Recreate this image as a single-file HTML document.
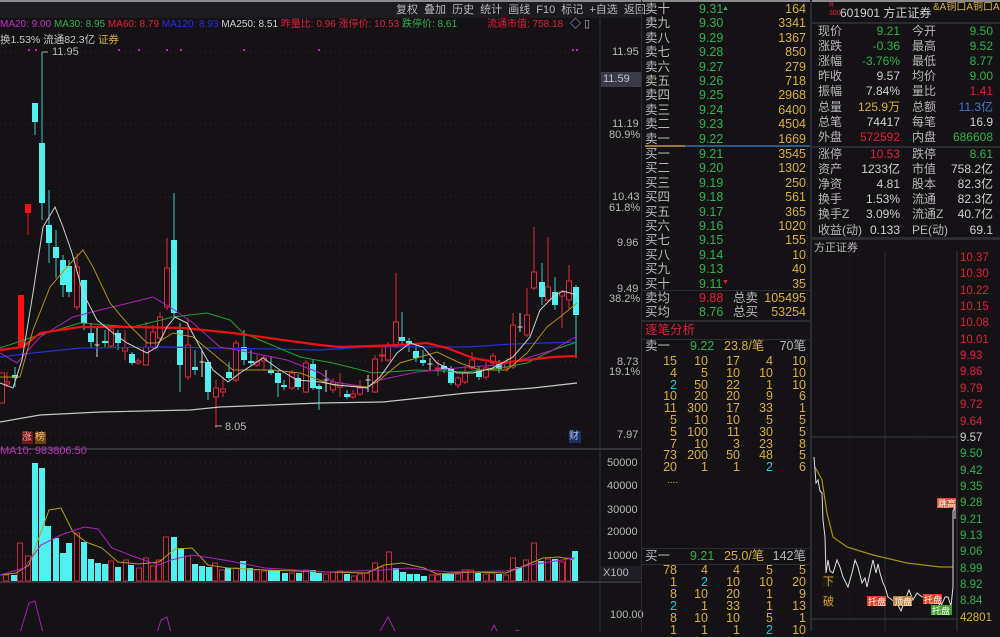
<!DOCTYPE html>
<html><head><meta charset="utf-8"><style>
*{margin:0;padding:0;box-sizing:border-box}
body{width:1000px;height:631px;overflow:hidden;background:#141215;font-family:"Liberation Sans","Noto Sans CJK SC",sans-serif;font-size:11px;color:#c8c8c8;position:relative}
.a{position:absolute;white-space:nowrap;line-height:14px;height:14px}
.r{text-align:right}
.g{color:#2fb34a}.y{color:#d8b040}.rd{color:#e0203a}.w{color:#d0d0d0}.gr{color:#b8b8b8}.cy{color:#22c8e0}.bl{color:#3a7ad8}
</style></head><body>
<div class="a" style="left:0;top:0;width:1000px;height:2px;background:#8a8a8a"></div>
<div class="a" style="left:0;top:2px;width:641px;height:16px;background:#1c1b20"></div>
<div class="a gr" style="left:396px;top:3px;font-size:11px;word-spacing:3px">复权 叠加 历史 统计 画线 F10 标记 +自选 返回</div>
<div class="a" style="left:0;top:18px;font-size:10px"><span style="color:#c030c0">MA20: 9.00</span> <span class="g">MA30: 8.95</span> <span class="rd">MA60: 8.79</span> <span style="color:#2030e0">MA120: 8.93</span> <span class="w">MA250: 8.51</span> <span class="rd">昨量比: 0.96</span> <span class="rd">涨停价: 10.53</span> <span class="g">跌停价: 8.61</span></div>
<div class="a rd" style="left:487px;top:18px;font-size:10px">流通市值: 758.18</div>
<div class="a gr" style="left:570px;top:17px">◇ ▯</div>
<div class="a" style="left:0;top:33px;font-size:10.5px">换1.53% 流通82.3亿 <span class="y">证券</span></div>

<svg id="ch" width="641" height="631" style="position:absolute;left:0;top:0"></svg>

<div class="a gr" style="left:612px;top:45px">11.95</div>
<div class="a" style="left:601px;top:72px;width:40px;height:15px;background:#3a3a48;color:#c0c0c8;padding-left:2px">11.59</div>
<div class="a gr" style="left:612px;top:117px">11.19</div>
<div class="a gr" style="left:609px;top:128px">80.9%</div>
<div class="a gr" style="left:612px;top:190px">10.43</div>
<div class="a gr" style="left:609px;top:201px">61.8%</div>
<div class="a gr" style="left:617px;top:236px">9.96</div>
<div class="a gr" style="left:617px;top:282px">9.49</div>
<div class="a gr" style="left:609px;top:292px">38.2%</div>
<div class="a gr" style="left:617px;top:355px">8.73</div>
<div class="a gr" style="left:609px;top:365px">19.1%</div>
<div class="a gr" style="left:617px;top:428px">7.97</div>
<div class="a gr" style="left:607px;top:456px">50000</div>
<div class="a gr" style="left:607px;top:479px">40000</div>
<div class="a gr" style="left:607px;top:503px">30000</div>
<div class="a gr" style="left:607px;top:525px">20000</div>
<div class="a gr" style="left:607px;top:549px">10000</div>
<div class="a gr" style="left:601px;top:566px;width:40px;background:#1e1e24;padding-left:2px">X100</div>
<div class="a gr" style="left:610px;top:608px">100.00</div>
<div class="a" style="left:0;top:444px;color:#c030c0">MA10: 983806.50</div>
<div class="a" style="left:22px;top:432px;width:11px;height:12px;line-height:12px;background:#701818;color:#f0a0a0;font-size:10px">涨</div>
<div class="a" style="left:35px;top:432px;width:11px;height:12px;line-height:12px;background:#704010;color:#f0c080;font-size:10px">榜</div>
<div class="a" style="left:569px;top:431px;width:12px;height:12px;line-height:12px;background:#1c3060;color:#a0c0f0;font-size:10px">财</div>
<div class="a gr" style="left:52px;top:45px">11.95</div>
<div class="a gr" style="left:225px;top:420px">8.05</div>

<div class="a" style="left:641px;top:0;width:1px;height:631px;background:#2c2c30"></div>
<div class="a" style="left:810px;top:0;width:2px;height:631px;background:#2c2c30"></div>
<div class="a" style="left:645px;top:145px;width:40px;height:1.5px;background:#9a7a30"></div>
<div class="a" style="left:685px;top:145px;width:125px;height:1.5px;background:#2a5a8a"></div>
<div class="a" style="left:642px;top:290px;width:168px;height:1px;background:#2c2c30"></div>
<div class="a" style="left:642px;top:320px;width:168px;height:2px;background:#2c2c30"></div>
<div class="a" style="left:642px;top:339px;width:168px;height:1px;background:#2c2c30"></div>
<div class="a" style="left:642px;top:548px;width:168px;height:1px;background:#2c2c30"></div>
<div class="a" style="left:642px;top:564px;width:168px;height:1px;background:#2c2c30"></div>
<div id="ob"></div>
<div class="a rd" style="left:645px;top:323px;font-size:12.5px">逐笔分析</div>

<div class="a" style="left:812px;top:22px;width:188px;height:2px;background:#2c2c30"></div>
<div class="a" style="left:812px;top:146px;width:188px;height:2px;background:#2c2c30"></div>
<div class="a" style="left:812px;top:237px;width:188px;height:3px;background:#2c2c30"></div>
<div class="a rd" style="left:829px;top:2px;font-size:7px;line-height:8px">R<br>300</div>
<div class="a w" style="left:840px;top:6px;font-size:12px">601901 方正证券</div>
<div class="a y" style="left:933px;top:1px;font-size:10px">&amp;A铜口A铜口A铜</div>
<div class="a gr" style="left:814px;top:241px;font-size:11px">方正证券</div>
<svg width="188" height="380" style="position:absolute;left:812px;top:251px">
<g stroke="#2a2a30" stroke-dasharray="1,3"><line x1="38" y1="0" x2="38" y2="380"/><line x1="108" y1="0" x2="108" y2="380"/></g>
<line x1="73" y1="0" x2="73" y2="380" stroke="#2c2c34"/>
<line x1="145" y1="0" x2="145" y2="380" stroke="#3a3a40"/>
<line x1="0" y1="186" x2="145" y2="186" stroke="#3a3a44"/>
<line x1="0" y1="368" x2="145" y2="368" stroke="#3a3a44"/>
<polyline fill="none" stroke="#a89010" stroke-width="1.2" points="3,216 10,229 15,262 21,286 35,296 61,304 95,312 128,316 141,316"/>
<polyline fill="none" stroke="#e0e0e0" stroke-width="1" points="2,206 4,232 6,229 8,240 10,242 11,269 13,286 14,322 16,309 18,320 21,322 25,309 28,316 31,326 34,332 36,336 40,322 43,309 46,316 50,332 53,327 55,336 58,322 61,309 64,322 66,313 68,322 71,332 73,336 76,346 80,349 85,352 89,360 93,349 97,339 101,349 105,342 110,346 116,346 121,349 126,352 129,355 133,346 136,346 139,355 141,336 141,260 143,256 143,268"/>
<rect x="10" y="324" width="11" height="12" fill="#201a14"/><text x="11" y="334" fill="#d8a030" font-size="11">下</text>
<rect x="10" y="344" width="11" height="12" fill="#201a14"/><text x="11" y="354" fill="#d8a030" font-size="11">破</text>
<rect x="55" y="345" width="19" height="10" fill="#e04020"/><text x="56" y="354" fill="#fff" font-size="9">托盘</text>
<rect x="81" y="345" width="19" height="10" fill="#c08040"/><text x="82" y="354" fill="#fff" font-size="9">顶盘</text>
<rect x="111" y="343" width="19" height="10" fill="#e04020"/><text x="112" y="352" fill="#fff" font-size="9">托盘</text>
<rect x="119" y="354" width="21" height="10" fill="#40a030"/><text x="120" y="363" fill="#fff" font-size="9">托盘</text>
<rect x="125" y="247" width="19" height="10" fill="#e05030"/><text x="126" y="256" fill="#fff" font-size="9">跳高</text>
</svg>
<div id="ax"></div>

<script>
var svg=document.getElementById('ch'),h='';
function L(x1,y1,x2,y2,c,w,d){h+='<line x1="'+x1+'" y1="'+y1+'" x2="'+x2+'" y2="'+y2+'" stroke="'+c+'" stroke-width="'+(w||1)+'"'+(d?' stroke-dasharray="'+d+'"':'')+'/>';}
[52,124,197,242,288,361,434].forEach(function(y){L(0,y,600,y,'#2a2a2e',1,'1,4')});
[463,486,510,532,556].forEach(function(y){L(0,y,600,y,'#2a2a2e',1,'1,4')});
[60,230,340,450].forEach(function(x){L(x,45,x,580,'#222226',1,'1,4')});
L(600,18,600,631,'#34343a');L(0,449,641,449,'#34343a',2);L(0,582,641,582,'#34343a',2);
[28,35,118,138,166,180,243,318,572,576].forEach(function(x){h+='<rect x="'+x+'" y="49" width="2" height="2" fill="#c020c0"/>'});
var C=[[2,373,403,373,403,'r'],[7,382,384,372,387,'r'],[15,375,378,367,387,'c'],[21,295,347,295,347,'R'],[28,204,213,204,235,'R'],[35,103,122,103,135,'c'],[42,143,203,52,220,'c'],[49,225,243,190,263,'c'],[56,247,258,230,278,'c'],[63,260,285,255,297,'c'],[69,266,292,260,297,'c'],[77,267,307,253,310,'r'],[84,280,323,280,330,'c'],[91,333,342,323,348,'c'],[97,345,346,327,357,'w'],[105,341,343,330,347,'c'],[111,329,346,325,347,'r'],[118,333,343,330,350,'c'],[125,348,351,330,360,'r'],[132,354,363,352,365,'c'],[138,361,363,358,365,'r'],[146,347,365,322,365,'r'],[153,332,347,325,350,'r'],[160,317,338,312,340,'r'],[167,268,307,238,310,'r'],[174,240,313,193,317,'c'],[180,330,365,323,392,'c'],[188,345,377,318,380,'r'],[195,367,370,350,375,'c'],[202,362,363,350,377,'w'],[208,362,392,360,400,'c'],[216,388,397,380,428,'r'],[223,389,392,377,397,'r'],[229,372,378,362,380,'c'],[236,343,380,340,382,'r'],[244,347,360,330,365,'c'],[251,361,363,350,365,'c'],[257,362,365,355,367,'r'],[264,358,361,355,370,'r'],[271,370,373,357,375,'c'],[278,373,383,370,397,'c'],[284,385,387,380,390,'c'],[292,373,388,370,390,'r'],[298,378,387,374,390,'c'],[306,363,392,360,393,'r'],[313,364,388,360,390,'c'],[319,386,389,384,410,'c'],[326,380,381,370,392,'w'],[333,382,390,378,393,'r'],[340,383,387,373,397,'r'],[347,394,397,390,399,'c'],[353,394,397,390,399,'r'],[360,388,394,380,396,'r'],[368,380,381,375,392,'w'],[375,359,392,355,393,'r'],[382,355,356,348,362,'r'],[388,347,360,342,362,'r'],[396,322,346,273,348,'r'],[402,337,341,312,345,'c'],[409,341,345,338,352,'c'],[416,351,358,345,362,'c'],[423,360,363,350,366,'c'],[430,364,366,358,370,'w'],[438,368,369,360,376,'r'],[444,366,370,362,373,'c'],[451,368,383,366,385,'c'],[458,378,385,376,388,'r'],[465,373,382,366,384,'r'],[472,360,368,352,370,'r'],[479,370,377,366,380,'c'],[486,368,377,362,380,'r'],[493,356,363,353,370,'r'],[499,364,369,360,373,'c'],[507,362,368,358,372,'r'],[513,325,367,313,369,'r'],[520,327,329,313,332,'w'],[527,315,335,288,337,'r'],[534,272,288,227,290,'r'],[542,282,297,263,305,'c'],[548,287,300,237,302,'r'],[555,292,305,277,310,'c'],[562,292,296,290,328,'r'],[569,281,300,265,310,'r'],[576,287,315,285,358,'c']];
var col={r:'#e0283c',R:'#ff1010',c:'#50f0f0',w:'#d8d8d8'};
C.forEach(function(k){var c=col[k[5]];L(k[0],k[3],k[0],k[4],c==col.c?'#40c8c8':c);
 if(k[5]=='w'){L(k[0]-2.5,k[1],k[0]+2.5,k[1],c);return;}
 var hh=Math.max(1,k[2]-k[1]);
 if(k[5]=='r')h+='<rect x="'+(k[0]-2.5)+'" y="'+k[1]+'" width="5" height="'+hh+'" fill="#141215" stroke="'+c+'"/>';
 else h+='<rect x="'+(k[0]-3)+'" y="'+k[1]+'" width="6" height="'+hh+'" fill="'+c+'"/>';});
function P(p,c,w){h+='<polyline fill="none" stroke="'+c+'" stroke-width="'+(w||1)+'" points="'+p+'"/>';}
P('0,422 40,415 100,412 190,410 220,407 320,403 383,402 467,393 533,388 577,383','#c8c8c8',1.3);
P('0,357 33,353 80,348 167,347 320,350 367,347 467,347 513,344 577,342','#2030e0',1.2);
P('0,348 33,337 80,323 133,327 173,317 207,313 230,320 243,333 267,343 300,357 333,363 373,373 417,370 467,372 500,368 527,363 553,350 577,342','#20a030');
P('0,353 17,363 40,337 73,317 100,310 133,302 153,297 170,307 193,323 220,347 253,353 287,360 320,373 333,382 367,387 380,380 417,372 467,367 500,365 527,358 553,350 577,336','#b020c0');
P('0,350 23,347 40,333 80,327 133,327 183,328 233,333 283,340 320,345 340,347 400,345 427,343 447,348 473,358 500,363 527,360 553,357 577,356','#f01010',2.2);
P('0,377 20,377 33,330 50,287 67,267 83,250 93,267 110,303 127,323 147,343 157,343 173,333 193,337 217,357 233,370 273,370 300,373 333,385 367,387 377,382 400,363 437,352 460,363 480,370 507,370 527,353 547,327 560,317 577,303','#b09010');
P('0,383 13,388 22,360 33,293 43,227 55,207 63,227 72,253 83,293 97,320 113,333 127,343 147,353 157,347 167,327 175,317 187,323 200,347 213,370 228,382 240,373 263,358 280,370 297,380 320,382 337,385 367,388 380,377 397,353 410,343 423,347 437,363 457,373 473,373 493,368 513,357 530,337 540,310 553,297 563,291 577,295','#d0d0d0');
L(42,52,48,52,'#aaa');L(215,426,222,426,'#aaa');
var V=[[6,575,'r'],[14,575,'c'],[20,543,'r'],[28,556,'r'],[35,463,'c'],[42,468,'c'],[48,526,'c'],[56,538,'c'],[63,553,'c'],[69,543,'c'],[77,533,'r'],[84,542,'c'],[91,559,'c'],[98,563,'c'],[105,564,'c'],[111,561,'r'],[118,567,'c'],[126,560,'r'],[131,565,'c'],[139,568,'r'],[146,558,'r'],[153,566,'r'],[159,560,'r'],[166,537,'r'],[174,537,'c'],[181,548,'c'],[188,556,'r'],[195,564,'c'],[202,566,'c'],[209,567,'c'],[215,563,'r'],[222,570,'r'],[228,568,'c'],[236,568,'r'],[243,561,'c'],[250,568,'c'],[257,570,'r'],[264,571,'r'],[271,570,'c'],[277,570,'c'],[285,573,'c'],[292,573,'r'],[299,573,'c'],[306,570,'r'],[313,570,'c'],[319,573,'c'],[326,574,'r'],[333,572,'r'],[340,571,'r'],[347,574,'c'],[354,576,'r'],[360,574,'r'],[367,573,'r'],[375,563,'r'],[381,567,'r'],[389,552,'r'],[396,568,'c'],[403,572,'c'],[410,574,'c'],[417,574,'c'],[424,576,'c'],[432,575,'r'],[438,575,'r'],[445,574,'c'],[451,574,'c'],[458,574,'r'],[465,570,'r'],[471,570,'r'],[478,573,'c'],[486,574,'r'],[492,573,'r'],[499,574,'c'],[506,575,'r'],[513,558,'r'],[519,567,'c'],[526,560,'r'],[534,543,'r'],[541,561,'c'],[548,559,'r'],[555,559,'c'],[562,562,'r'],[568,558,'r'],[575,551,'c']];
V.forEach(function(v){var hh=581-v[1];if(v[2]=='r')h+='<rect x="'+(v[0]-2.5)+'" y="'+v[1]+'" width="5" height="'+hh+'" fill="none" stroke="#d0283c"/>';else h+='<rect x="'+(v[0]-3)+'" y="'+v[1]+'" width="6" height="'+hh+'" fill="#50f0f0"/>';});
P('0,575 16,573 29,565 41,532 49,510 61,508 73,532 86,542 102,548 118,562 139,564 159,562 175,549 192,548 208,565 228,568 265,570 326,572 367,573 384,565 402,563 424,568 437,574 473,572 506,573 526,565 543,558 559,557 575,560','#b0a010');
P('0,575 24,568 41,545 61,535 84,527 98,529 112,548 135,557 159,565 171,560 192,555 224,560 265,568 326,572 384,570 408,568 449,572 506,571 530,565 575,558','#b020c0');
P('20,633 29,603 35,601 43,633','#a020b0');P('157,633 161,620 167,617 171,633','#a020b0');P('379,633 388,617 396,633','#a020b0');P('490,633 494,625 498,633','#a020b0');P('512,633 517,630 524,633','#a020b0');
svg.innerHTML=h;

var ob='',sell=[['卖十','9.31','164'],['卖九','9.30','3341'],['卖八','9.29','1367'],['卖七','9.28','850'],['卖六','9.27','279'],['卖五','9.26','718'],['卖四','9.25','2968'],['卖三','9.24','6400'],['卖二','9.23','4504'],['卖一','9.22','1669'],['买一','9.21','3545'],['买二','9.20','1302'],['买三','9.19','250'],['买四','9.18','561'],['买五','9.17','365'],['买六','9.16','1020'],['买七','9.15','155'],['买八','9.14','10'],['买九','9.13','40'],['买十','9.11','35']];
function A(x,y,t,c,r,fs){ob+='<div class="a '+(c||'')+(r?' r':'')+'" style="'+(r?'right:'+(1000-x):'left:'+x)+'px;top:'+(y-7)+'px;font-size:'+(fs||12.5)+'px">'+t+'</div>';}
sell.forEach(function(s,i){var y=i<10?9+i*14.4:154+(i-10)*14.4;A(645,y,s[0],'gr');A(699,y,s[1],'g');A(806,y,s[2],'y',1);});
A(722,9,'▲','g',0,7);A(722,283,'▼','rd',0,7);
A(645,298,'卖均','gr');A(699,298,'9.88','rd');A(733,298,'总卖','gr');A(806,298,'105495','y',1);
A(645,312,'买均','gr');A(699,312,'8.76','g');A(733,312,'总买','gr');A(806,312,'53254','y',1);
A(645,346,'卖一','gr');A(690,346,'9.22','g');A(724,346,'23.8/笔','y');A(806,346,'70笔','gr',1);
var T1=[[15,10,17,4,10],[4,5,10,10,10],[2,50,22,1,10],[10,20,20,9,6],[11,300,17,33,1],[5,10,10,5,5],[5,100,11,30,5],[7,10,3,23,8],[73,200,50,48,5],[20,1,1,2,6]],X=[677,708,740,773,806];
T1.forEach(function(r,i){r.forEach(function(v,j){A(X[j],361+i*11.8,v,(i==2&&j==0)||(i==9&&j==3)?'cy':'y',1);});});
A(667,481,'....','y',0,10);
A(645,556,'买一','gr');A(690,556,'9.21','g');A(724,556,'25.0/笔','y');A(806,556,'142笔','gr',1);
var T2=[[78,4,4,5,5],[1,2,10,10,20],[8,10,20,1,9],[2,1,33,1,13],[8,10,10,5,1],[1,1,1,2,10]];
T2.forEach(function(r,i){r.forEach(function(v,j){A(X[j],570+i*12,v,(i==1&&j==1)||(i==3&&j==0)||(i==5&&j==3)?'cy':'y',1);});});
var st=[['现价','9.21','g','今开','9.50','g'],['涨跌','-0.36','g','最高','9.52','g'],['涨幅','-3.76%','g','最低','8.77','g'],['昨收','9.57','w','均价','9.00','g'],['振幅','7.84%','w','量比','1.41','rd'],['总量','125.9万','y','总额','11.3亿','bl'],['总笔','74417','w','每笔','16.9','w'],['外盘','572592','rd','内盘','686608','g'],['涨停','10.53','rd','跌停','8.61','g'],['资产','1233亿','w','市值','758.2亿','w'],['净资','4.81','w','股本','82.3亿','w'],['换手','1.53%','w','流通','82.3亿','w'],['换手Z','3.09%','w','流通Z','40.7亿','w'],['收益(动)','0.133','w','PE(动)','69.1','w']];
st.forEach(function(s,i){var y=i<8?31+i*15.1:154+(i-8)*15.1;A(818,y,s[0],'gr',0,12);A(900,y,s[1],s[2],1,12);A(912,y,s[3],'gr',0,12);A(993,y,s[4],s[5],1,12);});
document.getElementById('ob').innerHTML=ob;ob='';
var ax=[['10.37','rd'],['10.30','rd'],['10.22','rd'],['10.15','rd'],['10.08','rd'],['10.01','rd'],['9.93','rd'],['9.86','rd'],['9.79','rd'],['9.72','rd'],['9.64','rd'],['9.57','w'],['9.50','g'],['9.42','g'],['9.35','g'],['9.28','g'],['9.21','g'],['9.13','g'],['9.06','g'],['8.99','g'],['8.92','g'],['8.84','g'],['42801','y']];
ax.forEach(function(a,i){A(960,258+i*16.35,a[0],a[1],0,11.5);});
document.getElementById('ax').innerHTML=ob;
</script>
</body></html>
